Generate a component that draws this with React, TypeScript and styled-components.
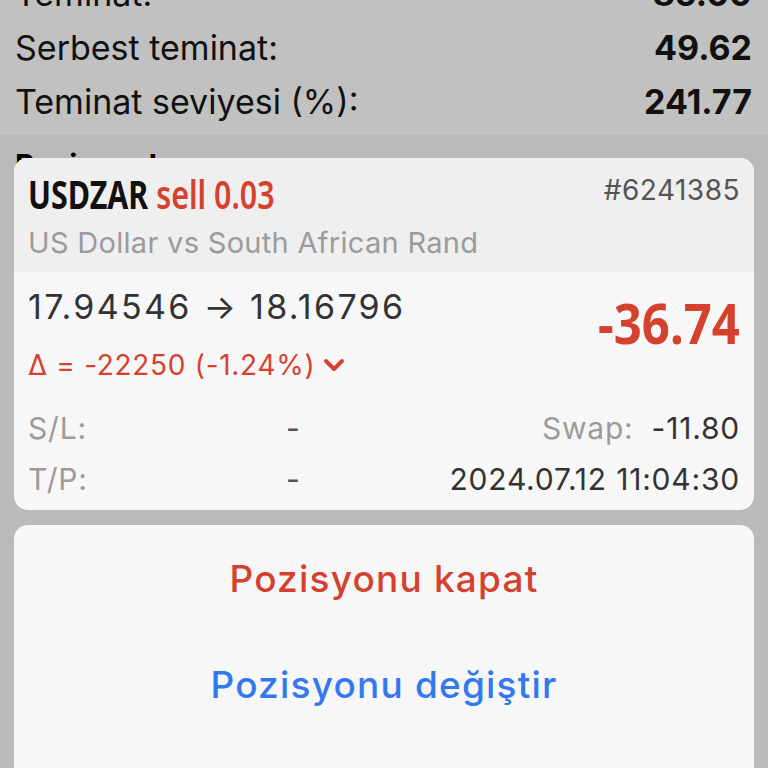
import React from "react";
import styled, { createGlobalStyle } from "styled-components";

const GlobalStyle = createGlobalStyle`
  html, body { margin: 0; padding: 0; background: #bababa; }
  body { font-family: "Inter", "Liberation Sans", sans-serif; -webkit-font-smoothing: antialiased; }
  * { box-sizing: border-box; }
`;

const RED = "#d5412f";
const BLUE = "#3279ef";

const Screen = styled.div`
  position: relative;
  width: 768px;
  height: 768px;
  overflow: hidden;
  background: #bababa;
`;

const Page = styled.div`
  display: flex;
  flex-direction: column;
`;

const Summary = styled.div`
  display: flex;
  flex-direction: column;
  margin-top: -34px;
  padding-bottom: 7px;
  background: #c1c1c1;
`;

const SummaryRow = styled.div`
  display: flex;
  align-items: center;
  justify-content: space-between;
  height: 54px;
  padding: 0 16px 0 15px;
  font-size: 34px;
  color: #111;
`;

const SummaryValue = styled.span`
  font-weight: 700;
`;

const SectionTitle = styled.div`
  padding: 12px 15px 0;
  font-size: 30px;
  font-weight: 700;
  color: #000;
`;

const Overlay = styled.div`
  position: absolute;
  inset: 0;
  display: flex;
  flex-direction: column;
  gap: 15px;
  padding: 158px 14px 0;
`;

const PositionCard = styled.div`
  flex-shrink: 0;
  border-radius: 14px;
  overflow: hidden;
  background: #f7f7f7;
`;

const CardHeader = styled.div`
  display: flex;
  flex-direction: column;
  padding: 14px 14px 11px;
  background: #efefef;
`;

const TitleRow = styled.div`
  display: flex;
  justify-content: space-between;
  align-items: flex-start;
  height: 44px;
`;

const Title = styled.div`
  display: inline-block;
  transform: scaleX(0.76);
  transform-origin: left center;
  font-family: "Noto Sans", "Open Sans", sans-serif;
  font-size: 40px;
  font-weight: 700;
  line-height: 44px;
  color: #111;
  white-space: nowrap;
`;

const Side = styled.span`
  color: ${RED};
  font-weight: 600;
`;

const Ticket = styled.div`
  font-size: 28px;
  line-height: 36px;
  letter-spacing: 0.5px;
  color: #555;
`;

const Description = styled.div`
  margin-top: 9px;
  font-size: 29px;
  line-height: 36px;
  letter-spacing: 0.3px;
  color: #9b9b9b;
`;

const CardBody = styled.div`
  display: flex;
  flex-direction: column;
  padding: 15px 14px 6px;
`;

const PriceRow = styled.div`
  display: flex;
  justify-content: space-between;
  align-items: flex-start;
`;

const PriceCol = styled.div`
  display: flex;
  flex-direction: column;
`;

const Prices = styled.div`
  font-size: 34px;
  line-height: 40px;
  letter-spacing: 2.3px;
  color: #333;
`;

const Delta = styled.div`
  display: flex;
  align-items: center;
  gap: 8px;
  margin-top: 20px;
  font-size: 28px;
  line-height: 36px;
  letter-spacing: 0.7px;
  color: ${RED};
`;

const Profit = styled.div`
  display: inline-block;
  transform: scaleX(0.876);
  transform-origin: right center;
  font-family: "Noto Sans", "Open Sans", sans-serif;
  font-size: 56px;
  font-weight: 700;
  line-height: 70px;
  color: ${RED};
`;

const DetailGrid = styled.div`
  display: grid;
  grid-template-columns: 258px auto 1fr;
  grid-auto-rows: 51px;
  align-items: center;
  margin-top: 19px;
  font-size: 30px;
  letter-spacing: 0.8px;
`;

const Label = styled.span`
  color: #9b9b9b;
`;

const Dash = styled.span`
  color: #555;
`;

const RightCell = styled.div`
  display: flex;
  justify-content: flex-end;
  gap: 18px;
`;

const Value = styled.span`
  color: #333;
`;

const ActionSheet = styled.div`
  flex-shrink: 0;
  display: flex;
  flex-direction: column;
  border-radius: 14px;
  background: #f7f7f7;
`;

const Action = styled.div<{ $tone?: "destructive" | "default" }>`
  display: flex;
  align-items: center;
  justify-content: center;
  height: 106px;
  flex-shrink: 0;
  font-size: 37px;
  font-weight: 500;
  letter-spacing: 1.2px;
  color: ${(p) => (p.$tone === "destructive" ? RED : BLUE)};
`;

const Chevron = () => (
  <svg width="22" height="14" viewBox="0 0 22 14" aria-hidden>
    <polyline
      points="3,3 11,11 19,3"
      fill="none"
      stroke={RED}
      strokeWidth="4"
      strokeLinecap="round"
      strokeLinejoin="round"
    />
  </svg>
);

const summary = [
  { label: "Teminat:", value: "85.00" },
  { label: "Serbest teminat:", value: "49.62" },
  { label: "Teminat seviyesi (%):", value: "241.77" },
];

export default function App() {
  return (
    <Screen>
      <GlobalStyle />
      <Page>
        <Summary>
          {summary.map((r) => (
            <SummaryRow key={r.label}>
              <span>{r.label}</span>
              <SummaryValue>{r.value}</SummaryValue>
            </SummaryRow>
          ))}
        </Summary>
        <SectionTitle>Pozisyonlar</SectionTitle>
      </Page>
      <Overlay>
        <PositionCard>
          <CardHeader>
            <TitleRow>
              <Title>
                USDZAR <Side>sell 0.03</Side>
              </Title>
              <Ticket>#6241385</Ticket>
            </TitleRow>
            <Description>US Dollar vs South African Rand</Description>
          </CardHeader>
          <CardBody>
            <PriceRow>
              <PriceCol>
                <Prices>17.94546 → 18.16796</Prices>
                <Delta>
                  Δ = -22250 (-1.24%) <Chevron />
                </Delta>
              </PriceCol>
              <Profit>-36.74</Profit>
            </PriceRow>
            <DetailGrid>
              <Label>S/L:</Label>
              <Dash>-</Dash>
              <RightCell>
                <Label>Swap:</Label>
                <Value>-11.80</Value>
              </RightCell>
              <Label>T/P:</Label>
              <Dash>-</Dash>
              <RightCell>
                <Value>2024.07.12 11:04:30</Value>
              </RightCell>
            </DetailGrid>
          </CardBody>
        </PositionCard>
        <ActionSheet>
          <Action $tone="destructive">Pozisyonu kapat</Action>
          <Action>Pozisyonu değiştir</Action>
          <Action>İşlem</Action>
        </ActionSheet>
      </Overlay>
    </Screen>
  );
}
